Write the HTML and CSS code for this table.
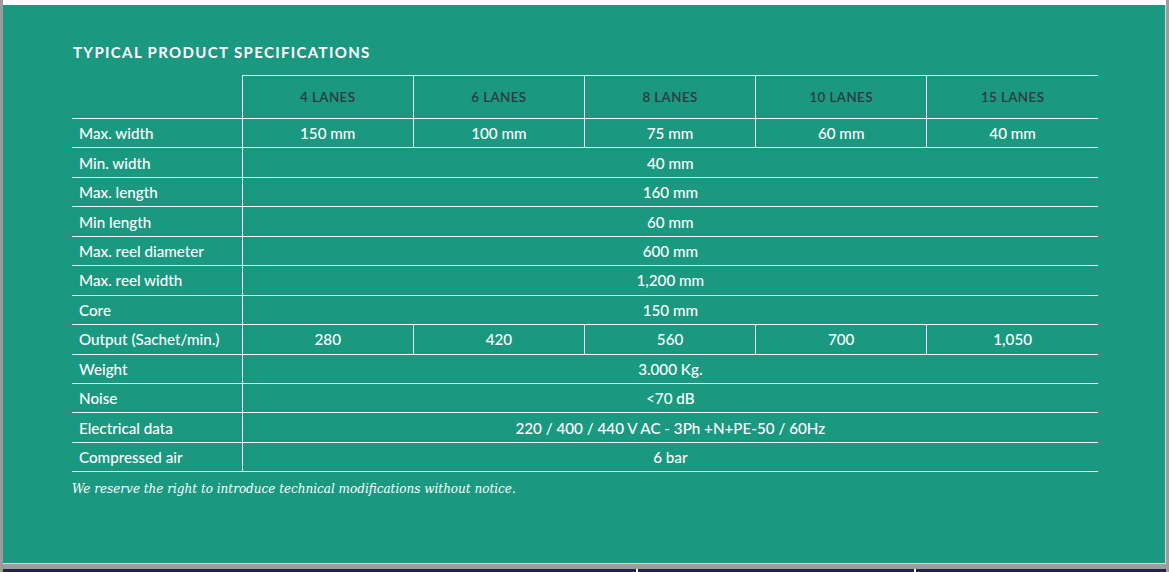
FILE: index.html
```html
<!DOCTYPE html>
<html>
<head>
<meta charset="utf-8">
<link rel="stylesheet" href="styles.css">
</head>
<body>
<div class="frame">
  <div class="topstrip"></div>
  <div class="panel">
    <h2 class="title">TYPICAL PRODUCT SPECIFICATIONS</h2>
    <table class="spec">
      <colgroup>
        <col class="c-label"><col class="c-val"><col class="c-val"><col class="c-val"><col class="c-val"><col class="c-val">
      </colgroup>
      <thead>
        <tr class="head">
          <th class="blank"></th>
          <th>4 LANES</th><th>6 LANES</th><th>8 LANES</th><th>10 LANES</th><th class="last">15 LANES</th>
        </tr>
      </thead>
      <tbody>
        <tr><td class="lbl">Max. width</td><td>150 mm</td><td>100 mm</td><td>75 mm</td><td>60 mm</td><td class="last">40 mm</td></tr>
        <tr><td class="lbl">Min. width</td><td colspan="5" class="last">40 mm</td></tr>
        <tr><td class="lbl">Max. length</td><td colspan="5" class="last">160 mm</td></tr>
        <tr><td class="lbl">Min length</td><td colspan="5" class="last">60 mm</td></tr>
        <tr><td class="lbl">Max. reel diameter</td><td colspan="5" class="last">600 mm</td></tr>
        <tr><td class="lbl">Max. reel width</td><td colspan="5" class="last">1,200 mm</td></tr>
        <tr><td class="lbl">Core</td><td colspan="5" class="last">150 mm</td></tr>
        <tr><td class="lbl">Output (Sachet/min.)</td><td>280</td><td>420</td><td>560</td><td>700</td><td class="last">1,050</td></tr>
        <tr><td class="lbl">Weight</td><td colspan="5" class="last">3.000 Kg.</td></tr>
        <tr><td class="lbl">Noise</td><td colspan="5" class="last">&lt;70 dB</td></tr>
        <tr><td class="lbl">Electrical data</td><td colspan="5" class="last">220 / 400 / 440 V AC - 3Ph +N+PE-50 / 60Hz</td></tr>
        <tr><td class="lbl">Compressed air</td><td colspan="5" class="last">6 bar</td></tr>
      </tbody>
    </table>
    <p class="note">We reserve the right to introduce technical modifications without notice.</p>
  </div>
  <div class="gap"></div>
  <div class="navbar">
    <span class="notch n1"></span><span class="notch n2"></span>
  </div>
</div>
</body>
</html>
```
FILE: styles.css
```css
html, body {
  margin: 0;
  padding: 0;
}
body {
  background: #9c9c9c;
  width: 1169px;
  height: 572px;
  overflow: hidden;
}
.frame {
  margin-left: 3px;
  width: 1163px;
}
.topstrip {
  height: 5px;
  background: #ffffff;
}
.panel {
  height: 559px;
  box-sizing: border-box;
  background: #1b9880;
  border-right: 1px solid #c9dcd7;
  border-bottom: 1px solid #c9dcd7;
  padding: 38px 0 0 69px;
  font-family: "Lato", "Open Sans", sans-serif;
  color: #ffffff;
}
.title {
  margin: 0;
  font-family: "Lato", sans-serif;
  font-weight: 700;
  font-size: 15px;
  line-height: 18px;
  letter-spacing: 1.35px;
  color: #ffffff;
  padding-left: 1px;
}
.spec {
  margin-top: 14px;
  border-collapse: collapse;
  table-layout: fixed;
  width: 1026px;
  font-size: 15.2px;
  font-weight: 500;
}
.c-label { width: 170px; }
.c-val { width: 171px; }
.spec th, .spec td {
  padding: 0;
  border: 1px solid #f2f7f5;
  text-align: center;
  vertical-align: middle;
}
.spec .head th {
  height: 42px;
  font-weight: 600;
  font-size: 13.4px;
  letter-spacing: 0.4px;
  color: #2b3c3f;
  border-top: 1px solid #f2f7f5;
}
.spec .head th.blank {
  border-top: none;
  border-left: none;
}
.spec td {
  height: 28.45px;
}
.spec td.lbl {
  text-align: left;
  padding-left: 7px;
  border-left: none;
}
.spec .last {
  border-right: none;
}
.note {
  margin: 10px 0 0 0;
  font-family: "DejaVu Serif", serif;
  font-style: italic;
  font-size: 12px;
  color: #ffffff;
}
.gap {
  height: 5px;
}
.navbar {
  height: 3px;
  background: #1e2350;
  position: relative;
}
.notch {
  position: absolute;
  top: 0;
  width: 2px;
  height: 3px;
  background: #ffffff;
}
.n1 { left: 633px; }
.n2 { left: 911px; }
```
